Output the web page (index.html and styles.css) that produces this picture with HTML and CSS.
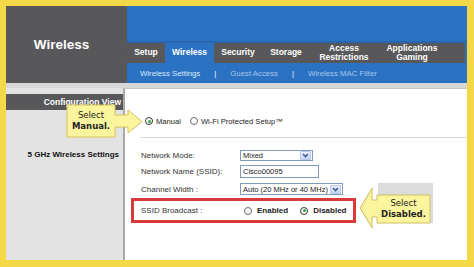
FILE: index.html
```html
<!DOCTYPE html>
<html lang="en">
<head>
    <meta charset="UTF-8">
    <meta name="viewport" content="width=device-width, initial-scale=1.0">
    <title>Wireless</title>
    <link rel="stylesheet" href="styles.css">
</head>
<body>
    <div class="frame">
        <header class="top">
            <div class="brand">Wireless</div>
            <div class="nav">
                <div class="nav-band"></div>
                <div class="tabs">
                    <div class="tab tab-setup">Setup</div>
                    <div class="tab tab-wireless active">Wireless</div>
                    <div class="tab tab-security">Security</div>
                    <div class="tab tab-storage">Storage</div>
                    <div class="tab tab-wide">Access<br>Restrictions</div>
                    <div class="tab tab-wide">Applications<br>Gaming</div>
                </div>
                <div class="subnav">
                    <span class="sub-item current">Wireless Settings</span>
                    <span class="sep">|</span>
                    <span class="sub-item">Guest Access</span>
                    <span class="sep">|</span>
                    <span class="sub-item">Wireless MAC Filter</span>
                </div>
            </div>
        </header>

        <div class="strip"></div>

        <div class="main">
            <aside class="side">
                <div class="side-bar">Configuration View</div>
                <div class="side-title">5 GHz Wireless Settings</div>
            </aside>

            <section class="content">
                <div class="mode-row">
                    <span class="radio checked"></span>
                    <span class="radio-text">Manual</span>
                    <span class="radio"></span>
                    <span class="radio-text">Wi-Fi Protected Setup™</span>
                </div>

                <div class="divider"></div>

                <div class="form-row row-mode">
                    <span class="label">Network Mode:</span>
                    <div class="select select-mode">
                        <span class="select-value">Mixed</span>
                        <span class="select-btn">
                            <svg width="7" height="5" viewBox="0 0 7 5"><path d="M1 1 L3.5 3.5 L6 1" fill="none" stroke="#3b5a9a" stroke-width="1.6"/></svg>
                        </span>
                    </div>
                </div>
                <div class="form-row row-name">
                    <span class="label">Network Name (SSID):</span>
                    <div class="text-input">Cisco00095</div>
                </div>
                <div class="form-row row-width">
                    <span class="label">Channel Width :</span>
                    <div class="select select-width">
                        <span class="select-value">Auto (20 MHz or 40 MHz)</span>
                        <span class="select-btn">
                            <svg width="7" height="5" viewBox="0 0 7 5"><path d="M1 1 L3.5 3.5 L6 1" fill="none" stroke="#3b5a9a" stroke-width="1.6"/></svg>
                        </span>
                    </div>
                </div>
                <div class="form-row row-broadcast">
                    <span class="label">SSID Broadcast :</span>
                    <div class="radio-group">
                        <span class="radio"></span>
                        <span class="radio-text bold">Enabled</span>
                        <span class="radio checked"></span>
                        <span class="radio-text bold">Disabled</span>
                    </div>
                </div>
            </section>
        </div>

        <!-- callouts -->
        <div class="callout callout-manual">
            <svg class="callout-shape" width="78" height="35" viewBox="0 0 78 35">
                <polygon points="1,1 49,1 49,11 62,11 62,6 76,17.5 62,29 62,23 49,23 49,33 1,33" fill="#fbf59e" stroke="#d4c25a" stroke-width="1"/>
            </svg>
            <div class="callout-text text-manual">Select<br><b>Manual.</b></div>
        </div>
        <div class="callout callout-disabled">
            <svg class="callout-shape" width="78" height="48" viewBox="0 0 78 48">
                <rect x="20" y="1" width="55" height="40" fill="#dcdcdc"/>
                <polygon points="19,13 72,13 72,41 19,41 19,35 14,35 14,46 2,26 14,6 14,18 19,18" fill="#fbf59e" stroke="#cfc063" stroke-width="1"/>
                <polyline points="13,9 4,26 13,43" fill="none" stroke="#e9e2a0" stroke-width="1"/>
            </svg>
            <div class="callout-text text-disabled">Select<br><b>Disabled.</b></div>
        </div>
    </div>
</body>
</html>
```

FILE: styles.css
```css
html, body {
    margin: 0;
    height: 267px;
}
body {
    padding: 6px 7px 7px 6px;
    box-sizing: border-box;
    background-color: #f5d848;
    font-family: "Liberation Sans", Arial, sans-serif;
    font-size: 8px;
    color: #333;
    overflow: hidden;
}
.frame {
    position: relative;
    width: 461px;
    height: 254px;
    display: flex;
    flex-direction: column;
    background-color: #e3e3e3;
}

/* header */
.top {
    display: flex;
    height: 77px;
}
.brand {
    width: 121px;
    background-color: #58585a;
    color: #fff;
    font-weight: bold;
    font-size: 13.5px;
    display: flex;
    align-items: center;
    justify-content: center;
    padding-right: 10px;
    box-sizing: border-box;
}
.nav {
    flex: 1;
    display: flex;
    flex-direction: column;
    background-color: #2b72c3;
}
.nav-band {
    height: 35px;
    border-bottom: 2px solid #2766b1;
}
.tabs {
    height: 20px;
    display: flex;
    background-color: #58585a;
    margin-right: 2px;
}
.tab {
    display: flex;
    align-items: center;
    justify-content: center;
    text-align: center;
    color: #fff;
    font-weight: bold;
    font-size: 8.5px;
    line-height: 9.5px;
}
.tab-setup {
    width: 38px;
}
.tab-wireless {
    width: 49px;
}
.tab-security,
.tab-storage {
    width: 48px;
}
.tab-wide {
    width: 68px;
}
.tab.active {
    background-color: #2b72c3;
}
.subnav {
    height: 20px;
    display: flex;
    align-items: center;
    gap: 14px;
    padding-left: 13px;
    font-size: 7.8px;
    color: #a9c6ec;
}
.sub-item.current {
    color: #dde9f8;
}
.sep {
    color: #fff;
}

.strip {
    height: 5px;
    background-color: #d7d7d7;
}

/* body */
.main {
    flex: 1;
    display: flex;
}
.side {
    width: 117px;
    padding-top: 6px;
}
.side-bar {
    height: 16px;
    background-color: #58585a;
    color: #fff;
    font-weight: bold;
    font-size: 8.5px;
    display: flex;
    align-items: center;
    justify-content: flex-end;
    padding-right: 2px;
}
.side-title {
    margin-top: 40px;
    line-height: 10px;
    text-align: right;
    padding-right: 4px;
    font-weight: bold;
    color: #111;
}
.content {
    flex: 1;
    background-color: #fff;
    border-left: 2px solid #a9a9a9;
    border-top: 1px solid #c6c6c6;
    padding: 26px 0 0 16px;
}
.mode-row {
    height: 12px;
    display: flex;
    align-items: center;
    padding-left: 4px;
    color: #222;
    font-size: 7.6px;
}
.radio {
    width: 6px;
    height: 6px;
    border: 1px solid #6a6a6a;
    border-radius: 50%;
    background-color: #fff;
    display: flex;
    align-items: center;
    justify-content: center;
    flex-shrink: 0;
}
.radio.checked {
    border-color: #333;
}
.radio.checked::after {
    content: "";
    width: 3px;
    height: 3px;
    border-radius: 50%;
    background-color: #33a33a;
}
.radio-text {
    margin-left: 3px;
    margin-right: 9px;
}
.radio-text.bold {
    font-weight: bold;
    margin-left: 5px;
    margin-right: 12px;
    color: #222;
}
.divider {
    height: 1px;
    background-color: #d6d6d6;
    margin: 10px 0 0 -1px;
}
.form-row {
    display: flex;
    align-items: center;
}
.label {
    width: 99px;
    flex-shrink: 0;
}
.row-mode {
    height: 11px;
    margin-top: 12px;
    margin-bottom: 4px;
}
.row-name {
    height: 13px;
    margin-bottom: 5px;
}
.row-width {
    height: 12px;
    margin-bottom: 3px;
}
.row-broadcast {
    width: 225px;
    height: 25px;
    box-sizing: border-box;
    margin-left: -10px;
    padding-left: 7px;
    border: 3px solid #d8393b;
}
.radio-group {
    display: flex;
    align-items: center;
    padding-left: 4px;
}
.select {
    height: 100%;
    box-sizing: border-box;
    border: 1px solid #7f9db9;
    display: flex;
    align-items: center;
    justify-content: space-between;
    padding: 0 1px 0 2px;
    background-color: #fff;
    color: #222;
    font-size: 7.5px;
    white-space: nowrap;
}
.select-mode {
    width: 73px;
}
.select-width {
    width: 103px;
}
.select-btn {
    width: 11px;
    height: 9px;
    box-sizing: border-box;
    border: 1px solid #b5c8ea;
    border-radius: 1px;
    background: linear-gradient(#eef3fc, #c4d6f3);
    display: flex;
    align-items: center;
    justify-content: center;
    flex-shrink: 0;
}
.text-input {
    width: 79px;
    height: 100%;
    box-sizing: border-box;
    border: 1px solid #7f9db9;
    padding-left: 2px;
    display: flex;
    align-items: center;
    color: #222;
    font-size: 7.5px;
}

/* callouts */
.callout {
    position: absolute;
}
.callout-manual {
    left: 60px;
    top: 98px;
    width: 78px;
    height: 35px;
}
.callout-disabled {
    left: 352px;
    top: 176px;
    width: 78px;
    height: 48px;
}
.callout-shape {
    display: block;
}
.callout-text {
    position: absolute;
    font-family: "DejaVu Sans", Verdana, sans-serif;
    font-size: 8.5px;
    line-height: 11px;
    text-align: center;
    color: #222;
}
.text-manual {
    left: 1px;
    top: 6px;
    width: 48px;
}
.text-disabled {
    left: 19px;
    top: 16px;
    width: 53px;
}
```
